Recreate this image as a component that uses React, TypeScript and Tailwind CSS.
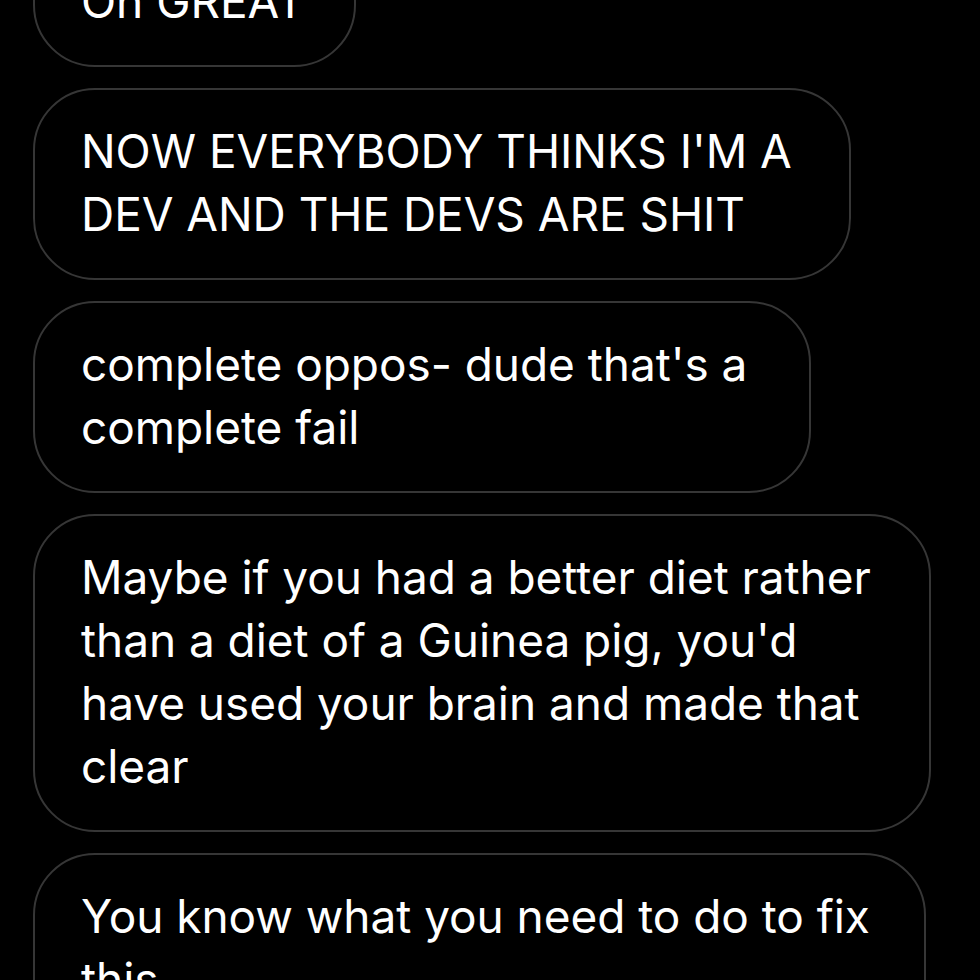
const messages = [
  { text: "Oh GREAT", width: "w-[323px]" },
  { text: "NOW EVERYBODY THINKS I'M A DEV AND THE DEVS ARE SHIT", width: "w-[818px]" },
  { text: "complete oppos- dude that's a complete fail", width: "w-[778px]" },
  {
    text: "Maybe if you had a better diet rather than a diet of a Guinea pig, you'd have used your brain and made that clear",
    width: "w-[898px]",
  },
  { text: "You know what you need to do to fix this", width: "w-[893px]" },
];

export default function App() {
  return (
    <div className="h-[980px] w-[980px] overflow-hidden bg-black">
      <div className="mt-[-62px] flex flex-col items-start gap-[21px] pl-[33px]">
        {messages.map((message, index) => (
          <div
            key={index}
            className={`${message.width} rounded-[62px] border-2 border-[#363636] pb-[32px] pl-[46px] pr-[40px] pt-[30px]`}
          >
            <p className="text-[46px] leading-[63px] tracking-[-0.05px] text-white [font-family:Inter,'Noto_Sans',sans-serif]">
              {message.text}
            </p>
          </div>
        ))}
      </div>
    </div>
  );
}
